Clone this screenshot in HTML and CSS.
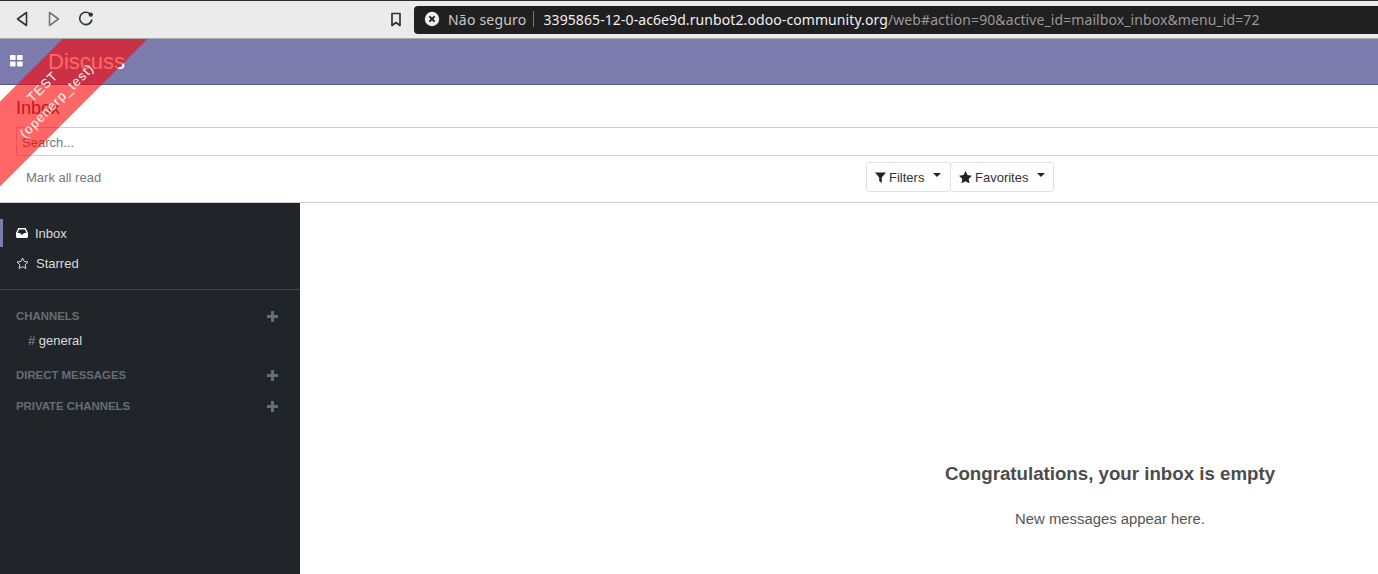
FILE: index.html
```html
<!doctype html>
<html>
<head>
    <title>Discuss</title>
    <link rel="stylesheet" href="styles.css">
</head>
<body>
<!-- browser chrome -->
<div class="browser-bar">
    <div class="nav-btns">
        <svg class="nav-icon" width="14" height="18" viewBox="0 0 14 18"><path d="M11.5 2.5v13L2.5 9z" fill="none" stroke="#2e3436" stroke-width="1.6" stroke-linejoin="round"/></svg>
        <svg class="nav-icon" width="14" height="18" viewBox="0 0 14 18"><path d="M2.5 2.5v13l9-6.5z" fill="none" stroke="#777" stroke-width="1.6" stroke-linejoin="round"/></svg>
        <svg class="nav-icon reload" width="18" height="18" viewBox="0 0 18 18"><path d="M12.8 3.6A6.2 6.2 0 1 0 15 9.500" fill="none" stroke="#2e3436" stroke-width="1.6"/><circle cx="13.800" cy="4.600" r="2.200" fill="#2e3436"/></svg>
    </div>
    <svg class="bookmark" width="12" height="15" viewBox="0 0 12 15"><path d="M2 1.500h8v12l-4-3-4 3z" fill="none" stroke="#2e3436" stroke-width="1.700" stroke-linejoin="round"/></svg>
    <div class="url-box">
        <svg width="16" height="16" viewBox="0 0 16 16"><circle cx="8" cy="8" r="7.200" fill="#eee"/><path d="M5.400 5.400l5.200 5.200M10.600 5.400l-5.200 5.200" stroke="#202020" stroke-width="2"/></svg>
        <span class="url-warn">Não seguro</span>
        <span class="url-sep"></span>
        <span class="url-host">3395865-12-0-ac6e9d.runbot2.odoo-community.org</span><span class="url-path">/web#action=90&amp;active_id=mailbox_inbox&amp;menu_id=72</span>
    </div>
</div>

<div class="webclient">
    <!-- test database ribbon -->
    <div class="ribbon"><div>TEST</div><div>(openerp_test)</div></div>

    <div class="navbar">
        <svg class="apps-icon" width="13" height="12" viewBox="0 0 13 12"><rect x="0" y="0" width="5.600" height="5" rx=".8"/><rect x="7" y="0" width="5.600" height="5" rx=".8"/><rect x="0" y="6.400" width="5.600" height="5" rx=".8"/><rect x="7" y="6.400" width="5.600" height="5" rx=".8"/></svg>
        <span class="brand">Discuss</span>
    </div>

    <div class="control-panel">
        <div class="cp-title">Inbox</div>
        <div class="cp-search">Search...</div>
        <div class="cp-actions">
            <div class="cp-left"><span class="mark-read">Mark all read</span></div>
            <div class="btn-group">
                <div class="btn btn-filters">
                    <svg width="11" height="11" viewBox="0 0 11 11"><path d="M0 .5h11L6.800 5.600V11L4.200 9V5.600z" fill="#212529"/></svg>
                    Filters<span class="caret"></span>
                </div>
                <div class="btn btn-favorites">
                    <svg width="13" height="12" viewBox="0 0 13 12"><path d="M6.500 0l2 4.100 4.500.6-3.300 3.200.8 4.500-4-2.200-4 2.200.8-4.500L0 4.700l4.500-.6z" fill="#212529"/></svg>
                    Favorites<span class="caret"></span>
                </div>
            </div>
        </div>
    </div>

    <div class="discuss">
        <div class="sidebar">
            <div class="box-row box-active">
                <svg width="12" height="10" viewBox="0 0 12 10"><path d="M2.300 0h7.400L12 5v3.600c0 .8-.5 1.400-1.200 1.400H1.200C.5 10 0 9.400 0 8.600V5zM3 1.400L1.600 5h2.600l.8 1.500h2L7.800 5h2.600L9 1.400z" fill="#fff" fill-rule="evenodd"/></svg>
                <span>Inbox</span>
            </div>
            <div class="box-row">
                <svg width="13" height="12" viewBox="0 0 13 12"><path d="M6.500 1l1.700 3.500 3.800.5-2.800 2.700.7 3.800-3.400-1.800-3.400 1.800.7-3.800L1 5l3.800-.5z" fill="none" stroke="#dcdcdc" stroke-width="1"/></svg>
                <span>Starred</span>
            </div>
            <div class="side-divider"></div>
            <div class="side-head head-channels">CHANNELS<span class="plus"></span></div>
            <div class="channel"><span class="hash">#</span> general</div>
            <div class="side-head head-direct">DIRECT MESSAGES<span class="plus"></span></div>
            <div class="side-head head-private">PRIVATE CHANNELS<span class="plus"></span></div>
        </div>
        <div class="thread">
            <div class="empty-title">Congratulations, your inbox is empty</div>
            <div class="empty-text">New messages appear here.</div>
        </div>
    </div>
</div>
</body>
</html>
```
FILE: styles.css
```css
* { box-sizing: border-box; }
html, body { height: 100%; }
body { margin: 0; overflow: hidden; display: flex; flex-direction: column; font-family: "Liberation Sans", Arial, sans-serif; font-size: 13px; color: #212529; background-color: #fff; }

/* browser chrome */
.browser-bar { height: 39px; flex: none; display: flex; align-items: center; background-color: #ebebeb; border-top: 1px solid #2e2e2e; border-bottom: 1px solid #a9a9a9; padding-top: 1px; }
.nav-btns { display: flex; align-items: center; width: 390px; padding: 0 0 2px 15px; }
.nav-icon { margin-right: 18px; }
.reload { margin-left: -2px; }
.bookmark { margin: 0 12px 2px 0; }
.url-box { flex: 1; height: 28px; display: flex; align-items: center; padding: 0 0 2px 10px; background-color: #202020; border-radius: 4px 0 0 4px; font-family: "Noto Sans", sans-serif; font-size: 14px; white-space: nowrap; }
.url-warn { color: #c8c8c8; margin-left: 8px; letter-spacing: .2px; }
.url-sep { width: 1px; height: 16px; background-color: #777; margin: 0 9px 0 7px; }
.url-host, .url-path { letter-spacing: .09px; }
.url-host { color: #f0f0f0; }
.url-path { color: #999; }

/* odoo */
.webclient { flex: 1; position: relative; overflow: hidden; display: flex; flex-direction: column; }
.ribbon { position: absolute; left: -100px; top: 25px; width: 300px; height: 60px; padding-top: 10px; transform: rotate(-45deg); background-color: rgba(255, 0, 0, .6); color: #fff; font-size: 13px; line-height: 20px; letter-spacing: 1px; text-align: center; white-space: nowrap; z-index: 10; }

.navbar { height: 46px; flex: none; display: flex; align-items: center; background-color: #7c7bad; border-bottom: 1px solid #5c5b8f; }
.apps-icon { fill: #fff; margin: -2px 0 0 10px; }
.brand { margin-left: 25px; font-size: 22px; color: #fff; }

.control-panel { flex: none; height: 118px; border-bottom: 1px solid #ccc; }
.cp-title { height: 42px; padding: 13px 0 0 16px; font-size: 18px; line-height: 20px; color: #4c4c4c; }
.cp-search { height: 29px; margin-left: 16px; padding: 0 0 0 5px; line-height: 29px; border: 1px solid #ccc; border-right: 0; border-radius: 3px 0 0 3px; color: #777; }
.cp-actions { display: flex; padding-top: 6px; }
.cp-left { width: 866px; padding: 8px 0 0 26px; }
.mark-read { color: #777; }
.btn-group { display: flex; }
.btn { height: 30px; display: flex; align-items: center; gap: 3px; background-color: #fff; border: 1px solid #dee2e6; border-radius: 3px; color: #333; }
.btn-filters { width: 85px; padding-left: 8px; }
.btn-favorites { width: 104px; margin-left: -1px; padding-left: 8px; }
.caret { width: 0; height: 0; margin: -4px 0 0 6px; border-top: 4px solid #212529; border-left: 4px solid transparent; border-right: 4px solid transparent; }

.discuss { flex: 1; display: flex; min-height: 0; }
.sidebar { width: 300px; flex: none; padding-top: 16px; background-color: #212529; color: #dcdcdc; }
.box-row { height: 30px; display: flex; align-items: center; gap: 7px; padding-left: 16px; }
.box-active { height: 28px; margin-bottom: 1px; padding-left: 13px; border-left: 3px solid #7c7bad; }
.side-divider { height: 1px; margin-top: 11px; background-color: #434850; }
.side-head { position: relative; padding-left: 16px; font-size: 11.4px; line-height: 14px; font-weight: bold; color: #666d75; }
.head-channels { margin-top: 19px; }
.head-direct { margin-top: 19px; }
.head-private { margin-top: 17px; }
.plus { position: absolute; left: 267px; top: 2px; width: 11px; height: 11px; background: linear-gradient(#666d75, #666d75) center / 11px 3px no-repeat, linear-gradient(#666d75, #666d75) center / 3px 11px no-repeat; }
.channel { padding: 10px 0 0 28px; height: 26px; line-height: 16px; color: #dcdcdc; }
.hash { color: #8a9099; }

.thread { flex: 1; padding: 260px 0 0 542px; text-align: center; color: #4c4c4c; }
.empty-title { font-size: 18.7px; line-height: 22px; font-weight: bold; }
.empty-text { margin-top: 25px; font-size: 14.85px; line-height: 18px; color: #555; }
```
